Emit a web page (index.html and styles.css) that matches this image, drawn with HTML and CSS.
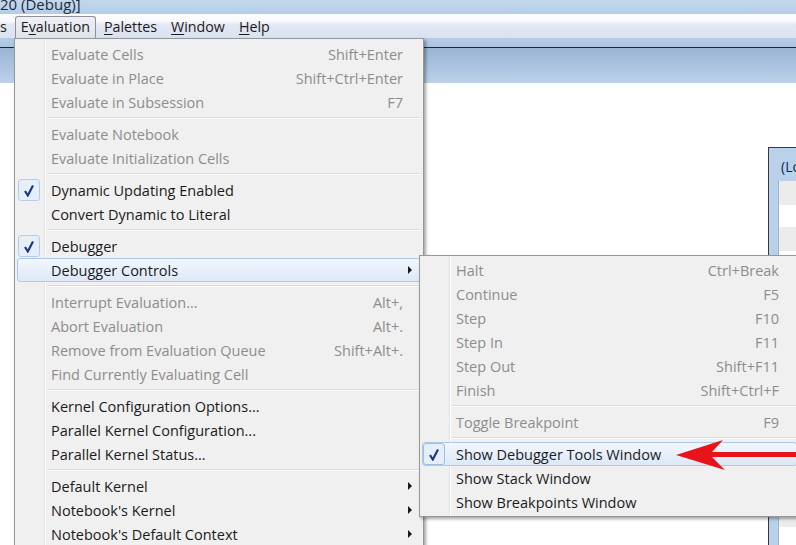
FILE: index.html
```html
<!DOCTYPE html>
<html lang="en">
<head>
    <meta charset="UTF-8">
    <title>Evaluation menu</title>
    <link rel="stylesheet" href="styles.css">
</head>
<body>
    <!-- 창 상단 -->
    <div class="titlebar"><span>20 (Debug)]</span></div>
    <div class="menubar">
        <span class="mb-item cut">s</span>
        <span class="mb-item open">E<u>v</u>aluation</span>
        <span class="mb-item"><u>P</u>alettes</span>
        <span class="mb-item"><u>W</u>indow</span>
        <span class="mb-item"><u>H</u>elp</span>
    </div>
    <div class="ribbon">
        <div class="rb-top"></div>
        <div class="rb-line"></div>
        <div class="rb-grad"></div>
    </div>

    <!-- 문서 영역 + 뒤쪽 창 -->
    <div class="doc">
        <div class="sidewin">
            <div class="sw-title">(Local</div>
            <div class="sw-body"></div>
        </div>
    </div>

    <!-- Evaluation 메뉴 -->
    <div class="menu mainmenu">
        <div class="item dis"><span></span><span class="lbl">Evaluate Cells</span><span class="key">Shift+Enter</span></div>
        <div class="item dis"><span></span><span class="lbl">Evaluate in Place</span><span class="key">Shift+Ctrl+Enter</span></div>
        <div class="item dis"><span></span><span class="lbl">Evaluate in Subsession</span><span class="key">F7</span></div>
        <div class="sep"></div>
        <div class="item dis"><span></span><span class="lbl">Evaluate Notebook</span><span class="key"></span></div>
        <div class="item dis"><span></span><span class="lbl">Evaluate Initialization Cells</span><span class="key"></span></div>
        <div class="sep"></div>
        <div class="item"><span class="chk"><svg viewBox="0 0 10 12"><path d="M1 6.5 L3.8 11 L9 1"/></svg></span><span class="lbl">Dynamic Updating Enabled</span><span class="key"></span></div>
        <div class="item"><span></span><span class="lbl">Convert Dynamic to Literal</span><span class="key"></span></div>
        <div class="sep"></div>
        <div class="item"><span class="chk"><svg viewBox="0 0 10 12"><path d="M1 6.5 L3.8 11 L9 1"/></svg></span><span class="lbl">Debugger</span><span class="key"></span></div>
        <div class="item sub hot"><span></span><span class="lbl">Debugger Controls</span><span class="key"></span></div>
        <div class="sep"></div>
        <div class="item dis"><span></span><span class="lbl">Interrupt Evaluation...</span><span class="key">Alt+,</span></div>
        <div class="item dis"><span></span><span class="lbl">Abort Evaluation</span><span class="key">Alt+.</span></div>
        <div class="item dis"><span></span><span class="lbl">Remove from Evaluation Queue</span><span class="key">Shift+Alt+.</span></div>
        <div class="item dis"><span></span><span class="lbl">Find Currently Evaluating Cell</span><span class="key"></span></div>
        <div class="sep"></div>
        <div class="item"><span></span><span class="lbl">Kernel Configuration Options...</span><span class="key"></span></div>
        <div class="item"><span></span><span class="lbl">Parallel Kernel Configuration...</span><span class="key"></span></div>
        <div class="item"><span></span><span class="lbl">Parallel Kernel Status...</span><span class="key"></span></div>
        <div class="sep"></div>
        <div class="item sub"><span></span><span class="lbl">Default Kernel</span><span class="key"></span></div>
        <div class="item sub"><span></span><span class="lbl">Notebook's Kernel</span><span class="key"></span></div>
        <div class="item sub"><span></span><span class="lbl">Notebook's Default Context</span><span class="key"></span></div>
    </div>

    <!-- Debugger Controls 하위메뉴 -->
    <div class="menu submenu">
        <div class="item dis"><span></span><span class="lbl">Halt</span><span class="key">Ctrl+Break</span></div>
        <div class="item dis"><span></span><span class="lbl">Continue</span><span class="key">F5</span></div>
        <div class="item dis"><span></span><span class="lbl">Step</span><span class="key">F10</span></div>
        <div class="item dis"><span></span><span class="lbl">Step In</span><span class="key">F11</span></div>
        <div class="item dis"><span></span><span class="lbl">Step Out</span><span class="key">Shift+F11</span></div>
        <div class="item dis"><span></span><span class="lbl">Finish</span><span class="key">Shift+Ctrl+F</span></div>
        <div class="sep"></div>
        <div class="item dis"><span></span><span class="lbl">Toggle Breakpoint</span><span class="key">F9</span></div>
        <div class="sep"></div>
        <div class="item hot"><span class="chk"><svg viewBox="0 0 10 12"><path d="M1 6.5 L3.8 11 L9 1"/></svg></span><span class="lbl">Show Debugger Tools Window</span><span class="key"></span></div>
        <div class="item"><span></span><span class="lbl">Show Stack Window</span><span class="key"></span></div>
        <div class="item"><span></span><span class="lbl">Show Breakpoints Window</span><span class="key"></span></div>
    </div>

    <!-- 빨간 화살표 -->
    <svg class="arrow" viewBox="0 0 130 40" width="130" height="40">
        <path d="M6 19 L53 4 L42 16 L130 16 L130 21 L42 21 L55 34 Z"/>
    </svg>
</body>
</html>
```

FILE: styles.css
```css
body {
    margin: 0;
    width: 796px;
    height: 545px;
    overflow: hidden;
    position: relative;
    background: #fff;
    font-family: "Open Sans", "Noto Sans", sans-serif;
    font-size: 14.5px;
    color: #1b1b1b;
}

/* 타이틀바 - 위가 잘려있음 */
.titlebar {
    height: 14px;
    overflow: hidden;
    background: linear-gradient(#c3d8ed, #b5cce5);
    font-size: 15px;
    line-height: 8px;
    color: #1f2b3c;
    white-space: nowrap;
}

/* 메뉴바 */
.menubar {
    height: 24px;
    display: flex;
    align-items: flex-end;
    gap: 2px;
    font-size: 14.25px;
    background: linear-gradient(#fcfdfe 0, #f8f9fc 30%, #e2e7f3 45%, #dbe2f0 100%);
}
.mb-item {
    height: 22px;
    box-sizing: border-box;
    line-height: 20px;
    padding: 0 5px;
    border: 1px solid transparent;
    border-bottom: 0;
    border-radius: 3px 3px 0 0;
    white-space: nowrap;
}
.mb-item.cut {
    padding-left: 0;
    border-left: 0;
}
.mb-item.open {
    border-color: #8d929b;
    background: linear-gradient(#eef0f5, #dfe3ea);
}
.mb-item u {
    text-underline-offset: 2px;
}

/* 리본(툴바 영역) */
.rb-top {
    height: 9px;
    background: linear-gradient(#b4cce6, #a9c4e0);
}
.rb-line {
    height: 1px;
    background: #1c2736;
}
.rb-grad {
    height: 35px;
    background: linear-gradient(#9ab4d3, #bbd2ea);
}

.doc {
    height: 462px;
    background: #fff;
}

/* 뒤에 떠있는 창 */
.sidewin {
    position: absolute;
    left: 768px;
    top: 147px;
    width: 60px;
    height: 420px;
    border: 1px solid #3a3a3a;
    background: #b9d1ea;
    padding-left: 9px;
    box-sizing: border-box;
}
.sw-title {
    height: 33px;
    padding: 10px 0 0 3px;
    box-sizing: border-box;
    font-size: 14px;
    line-height: 18px;
    color: #15254d;
    white-space: nowrap;
}
.sw-body {
    height: 380px;
    background: repeating-linear-gradient(#ececec 0, #ececec 24px, #fff 24px, #fff 46px);
    border-left: 1px solid #9fb4cc;
}

/* 공통 메뉴 */
.menu {
    position: absolute;
    box-sizing: border-box;
    border: 1px solid #979797;
    background: #f0f0f0;
    box-shadow: 2px 2px 3px rgba(0, 0, 0, 0.35);
}
/* 아이콘 구분선 */
.menu::before {
    content: "";
    position: absolute;
    top: 0;
    bottom: 0;
    left: 29px;
    width: 1px;
    background: #e2e3e3;
    box-shadow: 1px 0 0 #fff;
}
.mainmenu {
    left: 14px;
    top: 38px;
    width: 410px;
    height: 530px;
    padding: 3px 2px 2px;
    z-index: 10;
}
.submenu {
    left: 419px;
    top: 255px;
    width: 381px;
    padding: 2px;
    z-index: 11;
}

.item {
    position: relative;
    height: 24px;
    box-sizing: border-box;
    border: 1px solid transparent;
    border-radius: 3px;
    display: grid;
    grid-template-columns: 26px 1fr auto 17px;
    align-items: center;
    white-space: nowrap;
}
.item .lbl {
    padding-left: 7px;
}
.item.dis {
    color: #8d8d8d;
}
.item.hot {
    border-color: #aac9ec;
    background: linear-gradient(#f3f7fd, #dce8f8);
}
/* 하위메뉴 삼각형 */
.item.sub::after {
    content: "";
    justify-self: start;
    margin-left: 5px;
    border-left: 4px solid #1b1b1b;
    border-top: 4px solid transparent;
    border-bottom: 4px solid transparent;
}

/* 체크 박스 */
.chk {
    width: 22px;
    height: 22px;
    box-sizing: border-box;
    border: 1px solid #b3cdec;
    border-radius: 3px;
    background: #e6eef9;
    display: flex;
    align-items: center;
    justify-content: center;
}
.item.hot .chk {
    border-color: #9ebee6;
}
.chk svg {
    width: 10px;
    height: 13px;
}
.chk path {
    fill: none;
    stroke: #1d3a8a;
    stroke-width: 2.2;
}

.sep {
    height: 8px;
    margin-left: 30px;
    position: relative;
}
.sep::after {
    content: "";
    position: absolute;
    left: 0;
    right: 0;
    top: 3px;
    height: 0;
    border-top: 1px solid #dcdcdc;
    border-bottom: 1px solid #fff;
}

/* 빨간 화살표 */
.arrow {
    position: absolute;
    left: 670px;
    top: 436px;
    z-index: 12;
}
.arrow path {
    fill: #e8141a;
}
```
